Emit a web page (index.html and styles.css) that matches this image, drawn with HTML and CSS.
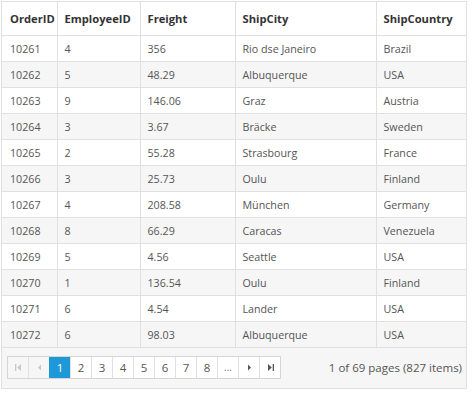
FILE: index.html
```html
<!DOCTYPE html>
<html>
<head>
<meta charset="utf-8">
<link rel="stylesheet" href="styles.css">
</head>
<body>
<div class="grid">
  <table class="table">
    <colgroup>
      <col class="c1"><col class="c2"><col class="c3"><col class="c4"><col class="c5">
    </colgroup>
    <thead>
      <tr><th>OrderID</th><th>EmployeeID</th><th>Freight</th><th>ShipCity</th><th>ShipCountry</th></tr>
    </thead>
    <tbody>
      <tr><td>10261</td><td>4</td><td>356</td><td>Rio dse Janeiro</td><td>Brazil</td></tr>
      <tr class="alt"><td>10262</td><td>5</td><td>48.29</td><td>Albuquerque</td><td>USA</td></tr>
      <tr><td>10263</td><td>9</td><td>146.06</td><td>Graz</td><td>Austria</td></tr>
      <tr class="alt"><td>10264</td><td>3</td><td>3.67</td><td>Bräcke</td><td>Sweden</td></tr>
      <tr><td>10265</td><td>2</td><td>55.28</td><td>Strasbourg</td><td>France</td></tr>
      <tr class="alt"><td>10266</td><td>3</td><td>25.73</td><td>Oulu</td><td>Finland</td></tr>
      <tr><td>10267</td><td>4</td><td>208.58</td><td>München</td><td>Germany</td></tr>
      <tr class="alt"><td>10268</td><td>8</td><td>66.29</td><td>Caracas</td><td>Venezuela</td></tr>
      <tr><td>10269</td><td>5</td><td>4.56</td><td>Seattle</td><td>USA</td></tr>
      <tr class="alt"><td>10270</td><td>1</td><td>136.54</td><td>Oulu</td><td>Finland</td></tr>
      <tr><td>10271</td><td>6</td><td>4.54</td><td>Lander</td><td>USA</td></tr>
      <tr class="alt"><td>10272</td><td>6</td><td>98.03</td><td>Albuquerque</td><td>USA</td></tr>
    </tbody>
  </table>
  <div class="pager">
    <div class="buttons">
      <span class="pb dis"><svg width="7" height="7" viewBox="0 0 7 7"><rect x="0" y="0" width="1.3" height="7" fill="currentColor"/><path d="M6 0 L2.2 3.5 L6 7 Z" fill="currentColor"/></svg></span>
      <span class="pb dis"><svg width="5" height="7" viewBox="0 0 5 7"><path d="M4 0.5 L1 3.5 L4 6.5 Z" fill="currentColor"/></svg></span>
      <span class="pb num active">1</span>
      <span class="pb num">2</span>
      <span class="pb num">3</span>
      <span class="pb num">4</span>
      <span class="pb num">5</span>
      <span class="pb num">6</span>
      <span class="pb num">7</span>
      <span class="pb num">8</span>
      <span class="pb num dots">...</span>
      <span class="pb"><svg width="5" height="7" viewBox="0 0 5 7"><path d="M1 0.5 L4 3.5 L1 6.5 Z" fill="currentColor"/></svg></span>
      <span class="pb"><svg width="7" height="7" viewBox="0 0 7 7"><path d="M1 0 L4.8 3.5 L1 7 Z" fill="currentColor"/><rect x="5.7" y="0" width="1.3" height="7" fill="currentColor"/></svg></span>
    </div>
    <div class="info">1 of 69 pages (827 items)</div>
  </div>
</div>
</body>
</html>
```
FILE: styles.css
```css
html, body {
  margin: 0;
  padding: 0;
  background: #fff;
}
body {
  padding: 1px 0 0 1px;
  font-family: "Open Sans", "Noto Sans", sans-serif;
  color: #333;
}
.grid {
  width: 464px;
  border: 1px solid #e0e0e0;
}
.table {
  width: 100%;
  border-collapse: collapse;
  table-layout: fixed;
}
.c1 { width: 55px; }
.c2 { width: 83px; }
.c3 { width: 95px; }
.c4 { width: 141px; }
.c5 { width: 90px; }
th, td {
  text-align: left;
  padding: 0 0 0 7px;
  border-left: 1px solid #e0e0e0;
  border-bottom: 1px solid #e0e0e0;
  white-space: nowrap;
  overflow: hidden;
}
th:first-child, td:first-child { border-left: none; padding-left: 8px; }
th {
  height: 33px;
  font-size: 11.2px;
  font-weight: 700;
  color: #333;
  padding-top: 1px;
  box-sizing: border-box;
}
td {
  height: 24px;
  font-size: 10.7px;
  color: #555;
  padding-top: 1px;
}
tr.alt td { background: #f6f6f6; }
.pager {
  height: 40px;
  background: #f6f6f6;
  display: flex;
  align-items: center;
  justify-content: space-between;
  padding: 0 4px 0 5px;
}
.buttons {
  display: flex;
  border: 1px solid #d5d5d5;
  background: #fff;
}
.pb {
  width: 20px;
  height: 21px;
  display: flex;
  align-items: center;
  justify-content: center;
  border-left: 1px solid #e0e0e0;
  color: #555;
  font-size: 11.5px;
}
.pb:first-child { border-left: none; }
.pb.dis { color: #c8c8c8; background: #f6f6f6; }
.pb.active { background: #1e98d7; color: #fff; border-left-color: #1e98d7; }
.pb.dots { font-size: 10px; color: #777; align-items: flex-end; padding-bottom: 4px; height: 17px; }
.info {
  font-size: 11.5px;
  color: #555;
}
```
